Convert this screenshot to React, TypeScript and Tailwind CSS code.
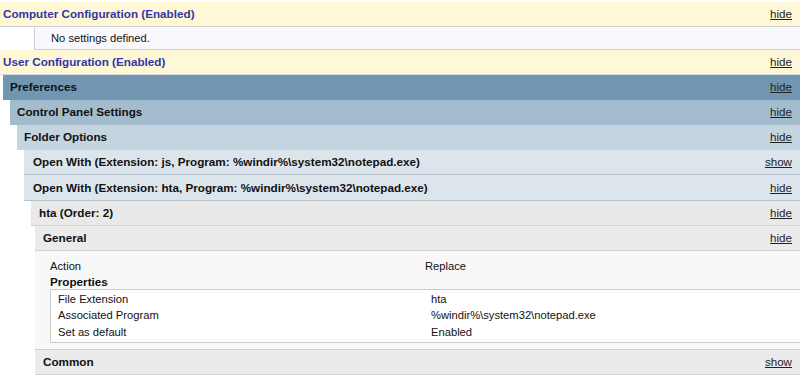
import React from "react";

const font = { fontFamily: '"Liberation Sans", Arial, sans-serif' };

function Link({ label }: { label: string }) {
  return <span className="underline text-[#222] text-[11.6px] font-normal">{label}</span>;
}

function Head({
  title,
  link = "hide",
  cls,
  textCls = "text-[#111]",
  pl,
  h = "h-[25px]",
}: {
  title: string;
  link?: string;
  cls: string;
  textCls?: string;
  pl: string;
  h?: string;
}) {
  return (
    <div className={`flex items-center justify-between pr-[8px] border-b ${h} ${cls} ${pl}`}>
      <span className={`font-bold text-[11.7px] ${textCls}`}>{title}</span>
      <Link label={link} />
    </div>
  );
}

export default function App() {
  return (
    <div className="w-[800px] h-[379px] bg-white overflow-hidden pt-[2px] text-[#111]" style={font}>
      <Head
        title="Computer Configuration (Enabled)"
        cls="bg-[#fef8d7] border-[#cfcfcf]"
        textCls="text-[#3535a8]"
        pl="pl-[3px]"
      />
      <div className="ml-[34px] h-[23px] flex items-center pl-[16px] bg-[#f9f8fc] border-l border-b border-[#cfcfcf] text-[11.2px]">
        No settings defined.
      </div>
      <Head
        title="User Configuration (Enabled)"
        cls="bg-[#fef8d7] border-[#d8d8d8]"
        textCls="text-[#3535a8]"
        pl="pl-[3px]"
      />
      <div className="ml-[3px]">
        <Head title="Preferences" cls="bg-[#7096b1] border-[#7096b1]" pl="pl-[7px]" />
        <div className="ml-[7px]">
          <Head title="Control Panel Settings" cls="bg-[#a3bdcf] border-[#a3bdcf]" pl="pl-[7px]" />
          <div className="ml-[7px]">
            <Head title="Folder Options" cls="bg-[#c5d5e0] border-[#c5d5e0]" pl="pl-[7px]" />
            <div className="ml-[7px]">
              <Head
                title="Open With (Extension: js, Program: %windir%\system32\notepad.exe)"
                link="show"
                cls="bg-[#dce5ec] border-[#b6c2cb]"
                pl="pl-[9px]"
              />
              <Head
                title="Open With (Extension: hta, Program: %windir%\system32\notepad.exe)"
                cls="bg-[#dce5ec] border-[#b6c2cb]"
                pl="pl-[9px]"
                h="h-[26px]"
              />
              <div className="ml-[7px]">
                <Head title="hta (Order: 2)" cls="bg-[#e9e9e9] border-[#d2d2d2]" pl="pl-[8px]" />
                <div className="ml-[4px]">
                  <Head title="General" cls="bg-[#ebebeb] border-[#d2d2d2]" pl="pl-[8px]" />
                  <div className="bg-[#f8f8f8] border-b border-[#cfcfcf] pt-[7px] pb-[6px] pl-[15px] text-[11.2px]">
                    <div className="flex h-[16px] items-center">
                      <span className="w-[375px]">Action</span>
                      <span>Replace</span>
                    </div>
                    <div className="h-[15px] flex items-center font-bold text-[11.7px]">Properties</div>
                    <div className="bg-white border border-r-0 border-[#cccccc] pl-[7px] pt-[1px] pb-[1px]">
                      <div className="flex h-[16.5px] items-center">
                        <span className="w-[373px]">File Extension</span>
                        <span>hta</span>
                      </div>
                      <div className="flex h-[16.5px] items-center">
                        <span className="w-[373px]">Associated Program</span>
                        <span>%windir%\system32\notepad.exe</span>
                      </div>
                      <div className="flex h-[16.5px] items-center">
                        <span className="w-[373px]">Set as default</span>
                        <span>Enabled</span>
                      </div>
                    </div>
                  </div>
                  <Head title="Common" link="show" cls="bg-[#ebebeb] border-[#d2d2d2]" pl="pl-[8px]" />
                </div>
              </div>
            </div>
          </div>
        </div>
      </div>
    </div>
  );
}
